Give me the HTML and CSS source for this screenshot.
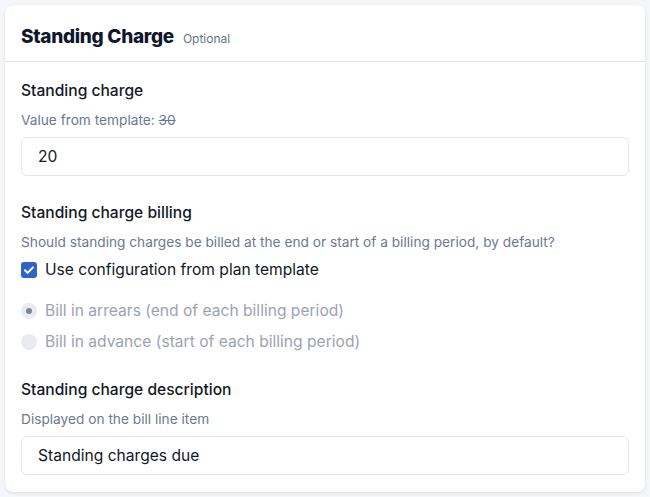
FILE: index.html
```html
<!DOCTYPE html>
<html lang="en">
<head>
  <meta charset="UTF-8" />
  <title>Standing Charge</title>
  <link rel="stylesheet" href="styles.css">
</head>
<body>
  <section class="card">
    <header class="card-head">
      <h2>Standing Charge</h2>
      <span class="tag">Optional</span>
    </header>

    <div class="card-body">
      <div class="field">
        <label class="label" for="charge">Standing charge</label>
        <p class="help">Value from template: <s>30</s></p>
        <input id="charge" class="input" type="text" value="20">
      </div>

      <div class="field">
        <div class="label">Standing charge billing</div>
        <p class="help">Should standing charges be billed at the end or start of a billing period, by default?</p>
        <label class="check">
          <span class="box">
            <svg viewBox="0 0 16 16" width="16" height="16"><path d="M4 8.3l2.6 2.6L12 5.4" fill="none" stroke="#fff" stroke-width="2" stroke-linecap="round" stroke-linejoin="round"/></svg>
          </span>
          Use configuration from plan template
        </label>
        <div class="radios">
          <label class="radio disabled"><span class="dot on"></span>Bill in arrears (end of each billing period)</label>
          <label class="radio disabled"><span class="dot"></span>Bill in advance (start of each billing period)</label>
        </div>
      </div>

      <div class="field">
        <label class="label" for="desc">Standing charge description</label>
        <p class="help">Displayed on the bill line item</p>
        <input id="desc" class="input" type="text" value="Standing charges due">
      </div>
    </div>
  </section>
</body>
</html>
```

FILE: styles.css
```css
* { box-sizing: border-box; margin: 0; padding: 0; }
body {
  background-color: #f4f6f9;
  color: #111827;
  font-family: Inter, "Noto Sans", sans-serif;
  padding: 5px;
}
.card {
  background-color: #fff;
  border-radius: 8px;
  box-shadow: 0 1px 3px rgba(30, 41, 59, 0.12);
  width: 640px;
  height: 487px;
}
.card-head {
  display: flex;
  align-items: baseline;
  gap: 9px;
  padding: 20px 16px 0;
  height: 57px;
  border-bottom: 1px solid #e4e6ee;
}
.card-head h2 {
  font-size: 19px;
  font-weight: 800;
  letter-spacing: -0.3px;
  color: #0f172a;
}
.tag {
  color: #64748b;
  font-size: 12px;
}
.card-body {
  padding: 19px 16px 0;
}
.field {
  margin-bottom: 27px;
}
.field:nth-child(2) { margin-bottom: 27px; }
.label {
  display: block;
  font-size: 15.6px;
  font-weight: 500;
  color: #111827;
  line-height: 20px;
}
.help {
  color: #6b7a90;
  font-size: 13.7px;
  line-height: 18px;
  margin-top: 10px;
  margin-bottom: 8px;
}
.help s { color: #6b7a90; }
.input {
  display: block;
  width: 100%;
  height: 39px;
  border: 1px solid #e2e6ee;
  border-radius: 6px;
  padding: 0 16px;
  font-family: inherit;
  font-size: 15.6px;
  color: #111827;
  background: #fff;
}
.check {
  display: flex;
  align-items: center;
  gap: 8px;
  font-size: 15.6px;
  line-height: 22px;
  margin-top: 2px;
}
.box {
  display: flex;
  width: 16px;
  height: 16px;
  border-radius: 3px;
  background-color: #2f63c8;
}
.radios {
  display: flex;
  flex-direction: column;
  gap: 9px;
  margin-top: 19px;
}
.radio {
  display: flex;
  align-items: center;
  gap: 8px;
  font-size: 15.6px;
  line-height: 22px;
}
.radio.disabled { color: #9ca3af; }
.dot {
  width: 16px;
  height: 16px;
  border-radius: 50%;
  background-color: #e8ecf2;
  display: flex;
  align-items: center;
  justify-content: center;
}
.dot.on::after {
  content: "";
  width: 6px;
  height: 6px;
  border-radius: 50%;
  background-color: #7c8698;
}
```
